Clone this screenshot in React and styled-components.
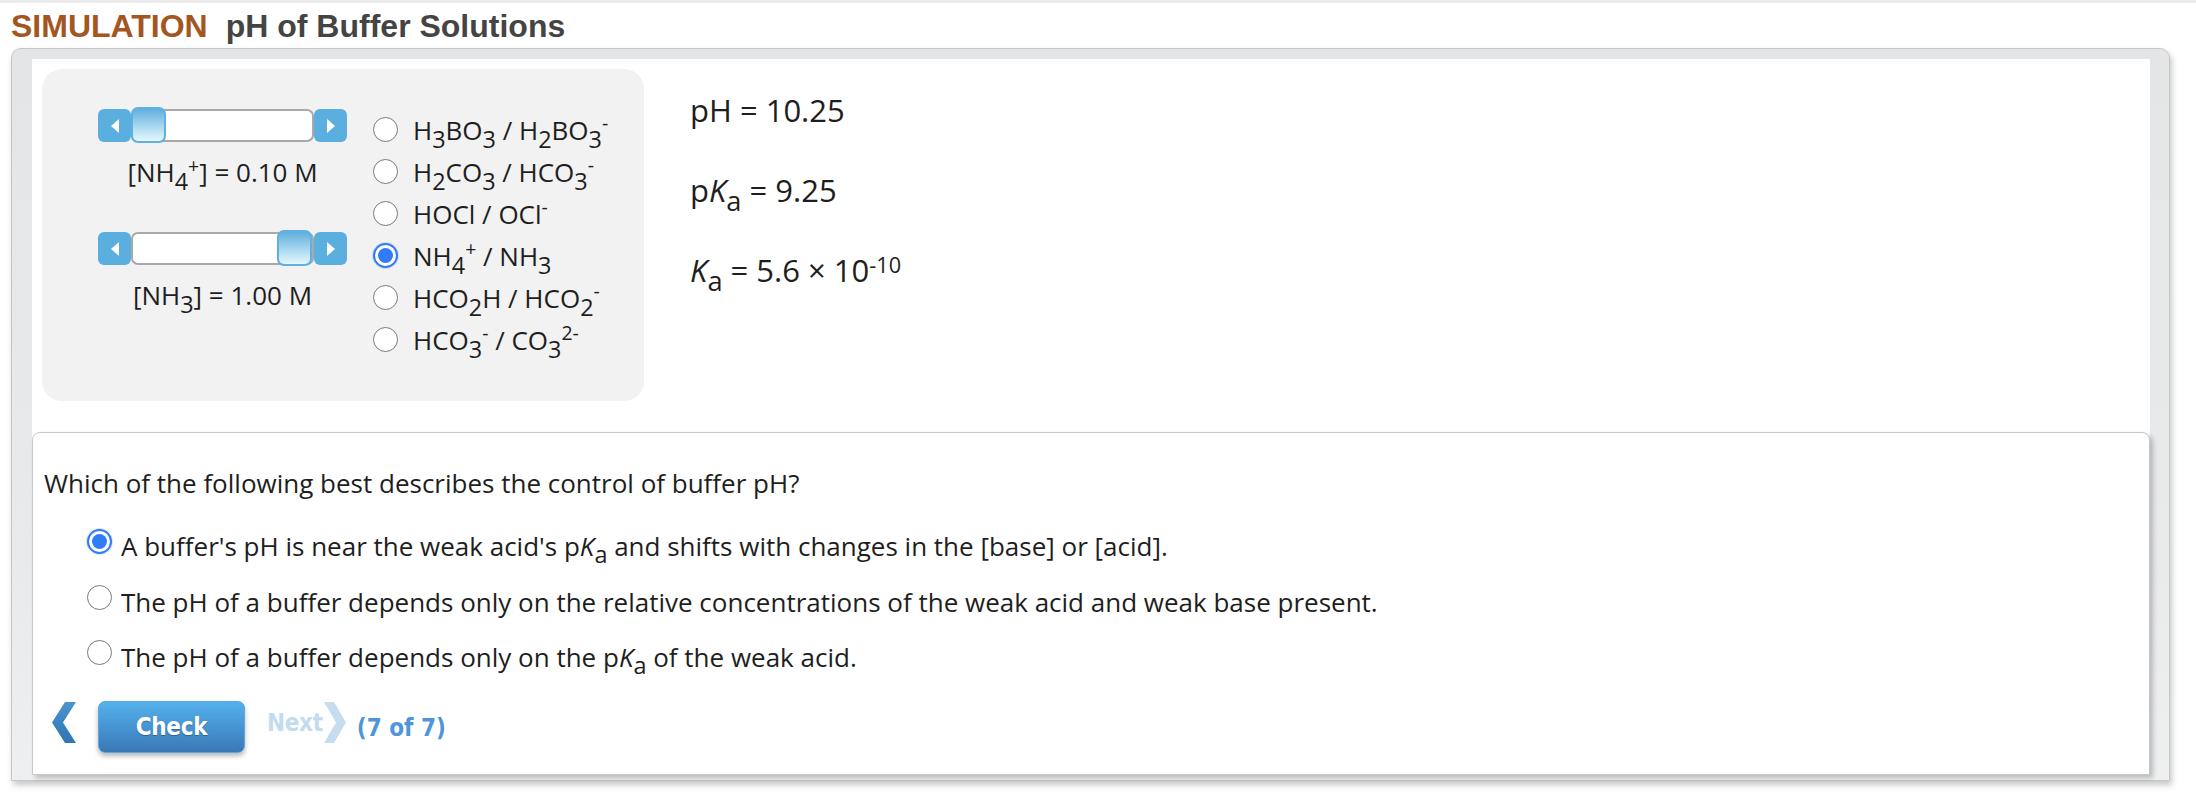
import React from "react";
import styled, { createGlobalStyle } from "styled-components";

const Global = createGlobalStyle`
  html, body { margin: 0; padding: 0; background: #fff; }
  body { font-family: "Open Sans", "DejaVu Sans", sans-serif; color: #1e1e1e; }
  sub, sup { line-height: 0; }
`;

const Page = styled.div`
  width: 2196px;
  height: 806px;
  box-sizing: border-box;
  border-top: 3px solid #ececec;
`;

const Header = styled.h1`
  margin: 0;
  padding: 5px 0 4px 11px;
  height: 45px;
  box-sizing: border-box;
  display: flex;
  align-items: baseline;
  gap: 18px;
  font-family: "Liberation Sans", Arial, sans-serif;
  font-weight: 700;
  font-size: 32px;
  line-height: 36px;
`;

const Kind = styled.span`
  color: #a3561f;
`;

const Title = styled.span`
  color: #444;
`;

const Frame = styled.div`
  margin-left: 11px;
  width: 2159px;
  box-sizing: border-box;
  background: linear-gradient(#e4e5e7, #e9eaec 70%, #eeeff0);
  border: 1px solid #c6c6c6;
  border-radius: 10px 10px 0 0;
  padding: 10px 19px 5px 20px;
  box-shadow: 2px 4px 6px rgba(0, 0, 0, 0.22);
`;

const Inner = styled.div`
  background: #fff;
`;

const TopSection = styled.div`
  height: 373px;
  box-sizing: border-box;
  padding: 10px 0 0 10px;
  display: flex;
  align-items: flex-start;
`;

const ControlBox = styled.div`
  width: 602px;
  height: 332px;
  box-sizing: border-box;
  border-radius: 20px;
  background: #f2f2f2;
  padding-left: 56px;
  display: flex;
  gap: 26px;
`;

const SliderColumn = styled.div`
  width: 249px;
  padding-top: 40px;
  display: flex;
  flex-direction: column;
`;

const SliderBlock = styled.div`
  margin-top: ${(p) => p.$top || 0}px;
`;

const SliderRow = styled.div`
  display: flex;
  height: 33px;
`;

const StepButton = styled.div`
  width: 33px;
  height: 33px;
  flex: none;
  background: #5aafde;
  border-radius: 6px;
  display: flex;
  align-items: center;
  justify-content: center;
`;

const Track = styled.div`
  position: relative;
  flex: 1;
  background: #fff;
  border: 2px solid #a9a9a9;
  border-radius: 7px;
  box-sizing: border-box;
`;

const Thumb = styled.div`
  position: absolute;
  top: -4px;
  width: 35px;
  height: 36px;
  box-sizing: border-box;
  border: 2px solid #5fb1e1;
  border-radius: 7px;
  background: linear-gradient(#62aedc, #a9d8f0 55%, #e6f7fd);
`;

const SliderLabel = styled.div`
  margin-top: 12px;
  text-align: center;
  font-size: 26px;
  line-height: 36px;
  sub { font-size: 0.9em; vertical-align: -0.34em; }
  sup { font-size: 0.75em; vertical-align: 0.45em; }
`;

const RadioColumn = styled.div`
  padding-top: 40px;
  display: flex;
  flex-direction: column;
`;

const PairRow = styled.label`
  display: flex;
  align-items: flex-start;
  gap: 15px;
  height: 42px;
  font-size: 26px;
  line-height: 42px;
  white-space: nowrap;
  sub { font-size: 0.9em; vertical-align: -0.34em; }
  sup { font-size: 0.75em; vertical-align: 0.5em; }
`;

const Radio = styled.span`
  flex: none;
  width: ${(p) => p.$size}px;
  height: ${(p) => p.$size}px;
  margin-top: ${(p) => p.$top}px;
  box-sizing: border-box;
  border-radius: 50%;
  background: #fff;
  border: ${(p) => (p.$on ? "2px solid #2f7cf6" : "1.6px solid #7a7a7a")};
  display: flex;
  align-items: center;
  justify-content: center;
  box-shadow: ${(p) => (p.$on ? "0 0 0 1px rgba(47,124,246,0.18)" : "none")};
  &::after {
    content: "";
    display: ${(p) => (p.$on ? "block" : "none")};
    width: ${(p) => p.$size - 10}px;
    height: ${(p) => p.$size - 10}px;
    border-radius: 50%;
    background: #2f7cf6;
  }
`;

const ResultPanel = styled.div`
  margin: 1px 0 0 46px;
  font-size: 31px;
  line-height: 80px;
  sub { font-size: 0.88em; vertical-align: -0.32em; }
  sup { font-size: 0.7em; vertical-align: 0.4em; }
`;

const ResultLine = styled.div`
  height: 80px;
  white-space: nowrap;
`;

const Card = styled.div`
  height: 343px;
  box-sizing: border-box;
  border: 1px solid #c8c8c8;
  border-radius: 8px 8px 0 0;
  background: #fff;
  box-shadow: 3px 3px 5px rgba(0, 0, 0, 0.22);
  padding: 32px 0 0 11px;
`;

const Question = styled.p`
  margin: 0;
  font-size: 26px;
  line-height: 36px;
`;

const Options = styled.div`
  margin: 18px 0 0 43px;
  display: flex;
  flex-direction: column;
`;

const OptionRow = styled.label`
  display: flex;
  align-items: flex-start;
  gap: 9px;
  height: 55.5px;
  font-size: 26px;
  line-height: 55px;
  white-space: nowrap;
  sub { font-size: 0.9em; vertical-align: -0.32em; }
`;

const NavRow = styled.div`
  margin: 15px 0 0 7px;
  display: flex;
  align-items: flex-start;
  font-family: "DejaVu Sans Condensed", "DejaVu Sans", sans-serif;
  font-weight: 700;
  font-size: 24px;
  line-height: 28px;
`;

const Chevron = styled.svg`
  flex: none;
  margin-top: 1px;
  margin-right: ${(p) => p.$mr || 0}px;
`;

const CheckButton = styled.button`
  width: 147px;
  height: 52px;
  margin-right: 22px;
  box-sizing: border-box;
  border: 1px solid #5aa9e0;
  border-radius: 7px;
  background: linear-gradient(#55b1ec, #4592cf 55%, #3a78b4);
  box-shadow: 0 3px 5px rgba(0, 0, 0, 0.28);
  color: #fff;
  font: inherit;
  line-height: 50px;
  text-shadow: 0 1px 1px rgba(0, 0, 0, 0.3);
  padding: 0;
  letter-spacing: -0.3px;
`;

const NextText = styled.span`
  margin-top: 8px;
  color: #c2dbef;
  letter-spacing: -0.3px;
`;

const Counter = styled.span`
  margin: 13px 0 0 10px;
  color: #4f95d9;
`;

function Slider({ pos }) {
  return (
    <SliderRow>
      <StepButton>
        <svg width="10" height="16" viewBox="0 0 10 16">
          <polygon points="9,1 9,15 1,8" fill="#fff" />
        </svg>
      </StepButton>
      <Track>
        <Thumb style={{ left: `calc(${pos}% - ${pos * 0.33 + 2}px)` }} />
      </Track>
      <StepButton>
        <svg width="10" height="16" viewBox="0 0 10 16">
          <polygon points="1,1 1,15 9,8" fill="#fff" />
        </svg>
      </StepButton>
    </SliderRow>
  );
}

const pairs = [
  <>H<sub>3</sub>BO<sub>3</sub> / H<sub>2</sub>BO<sub>3</sub><sup>-</sup></>,
  <>H<sub>2</sub>CO<sub>3</sub> / HCO<sub>3</sub><sup>-</sup></>,
  <>HOCl / OCl<sup>-</sup></>,
  <>NH<sub>4</sub><sup>+</sup> / NH<sub>3</sub></>,
  <>HCO<sub>2</sub>H / HCO<sub>2</sub><sup>-</sup></>,
  <>HCO<sub>3</sub><sup>-</sup> / CO<sub>3</sub><sup>2-</sup></>,
];

const options = [
  <>A buffer's pH is near the weak acid's p<i>K</i><sub>a</sub> and shifts with changes in the [base] or [acid].</>,
  <>The pH of a buffer depends only on the relative concentrations of the weak acid and weak base present.</>,
  <>The pH of a buffer depends only on the p<i>K</i><sub>a</sub> of the weak acid.</>,
];

export default function App() {
  return (
    <Page>
      <Global />
      <Header>
        <Kind>SIMULATION</Kind>
        <Title>pH of Buffer Solutions</Title>
      </Header>
      <Frame>
        <Inner>
          <TopSection>
            <ControlBox>
              <SliderColumn>
                <SliderBlock>
                  <Slider pos={0} />
                </SliderBlock>
                <SliderLabel>
                  [NH<sub>4</sub><sup>+</sup>] = 0.10 M
                </SliderLabel>
                <SliderBlock $top={42}>
                  <Slider pos={100} />
                </SliderBlock>
                <SliderLabel>
                  [NH<sub>3</sub>] = 1.00 M
                </SliderLabel>
              </SliderColumn>
              <RadioColumn>
                {pairs.map((p, i) => (
                  <PairRow key={i}>
                    <Radio $size={25} $top={8} $on={i === 3} />
                    <span>{p}</span>
                  </PairRow>
                ))}
              </RadioColumn>
            </ControlBox>
            <ResultPanel>
              <ResultLine>pH = 10.25</ResultLine>
              <ResultLine>
                p<i>K</i><sub>a</sub> = 9.25
              </ResultLine>
              <ResultLine>
                <i>K</i><sub>a</sub> = 5.6 × 10<sup>-10</sup>
              </ResultLine>
            </ResultPanel>
          </TopSection>
          <Card>
            <Question>Which of the following best describes the control of buffer pH?</Question>
            <Options>
              {options.map((o, i) => (
                <OptionRow key={i}>
                  <Radio $size={25} $top={10} $on={i === 0} />
                  <span>{o}</span>
                </OptionRow>
              ))}
            </Options>
            <NavRow>
              <Chevron width="26" height="41" viewBox="0 0 26 41" $mr={21}>
                <defs>
                  <linearGradient id="backG" x1="0" y1="0" x2="0" y2="1">
                    <stop offset="0" stopColor="#4a94d0" />
                    <stop offset="1" stopColor="#2f76b3" />
                  </linearGradient>
                </defs>
                <polygon points="25,0 14,0 1,20.5 14,41 25,41 12,20.5" fill="url(#backG)" />
              </Chevron>
              <CheckButton>Check</CheckButton>
              <NextText>Next</NextText>
              <Chevron width="24" height="41" viewBox="0 0 24 41">
                <polygon points="1,0 11,0 23,20.5 11,41 1,41 13,20.5" fill="#c6ddf0" />
              </Chevron>
              <Counter>(7 of 7)</Counter>
            </NavRow>
          </Card>
        </Inner>
      </Frame>
    </Page>
  );
}
